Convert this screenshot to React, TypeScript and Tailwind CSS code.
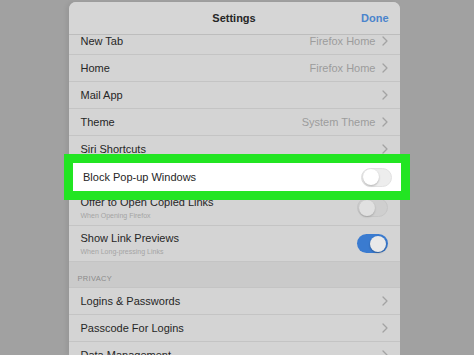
import React from "react";

const Chevron = () => (
  <svg width="6" height="10" viewBox="0 0 6 10" className="ml-[6px]">
    <path d="M1 1l4 4-4 4" fill="none" stroke="#a3a3a3" strokeWidth="1.3" strokeLinecap="round" strokeLinejoin="round" />
  </svg>
);

const Toggle = ({ on }: { on?: boolean }) =>
  on ? (
    <div className="w-[31px] h-[19px] rounded-full bg-[#3a7bd0] flex items-center justify-end pr-[1.5px]">
      <div className="w-[16px] h-[16px] rounded-full bg-[#e9e9e9] shadow-[0_1px_2px_rgba(0,0,0,0.3)]" />
    </div>
  ) : (
    <div className="w-[31px] h-[19px] rounded-full bg-[#cfcfcf] border border-[#c6c6c6] flex items-center pl-[1px]">
      <div className="w-[16px] h-[16px] rounded-full bg-[#e0e0e0] shadow-[0_1px_2px_rgba(0,0,0,0.2)]" />
    </div>
  );

const Row = ({ label, value, chevron = true }: { label: string; value?: string; chevron?: boolean }) => (
  <div className="h-[27px] flex items-center pl-[12px] pr-[12px] border-b border-[#c4c4c4]">
    <span className="text-[11px] text-[#262626] flex-1">{label}</span>
    {value && <span className="text-[11px] text-[#9c9c9c]">{value}</span>}
    {chevron && <Chevron />}
  </div>
);

const ToggleRow = ({ label, sub, on }: { label: string; sub: string; on?: boolean }) => (
  <div className="h-[36px] flex items-center pl-[12px] pr-[12px] border-b border-[#c4c4c4]">
    <div className="flex-1 flex flex-col">
      <span className="text-[11px] leading-[15px] text-[#262626]">{label}</span>
      <span className="text-[7px] leading-[11px] text-[#a4a4a4]">{sub}</span>
    </div>
    <Toggle on={on} />
  </div>
);

export default function App() {
  return (
    <div
      className="relative w-[474px] h-[355px] overflow-hidden bg-[#a1a1a1] flex justify-center"
      style={{ fontFamily: '"Liberation Sans", Arial, sans-serif' }}
    >
      <div className="mt-[2px] w-[331px] h-[353px] rounded-t-[7px] overflow-hidden bg-[#d4d4d4] flex flex-col ml-[-6px] shadow-[-3px_0_4px_rgba(0,0,0,0.06)]">
        <div className="h-[33px] shrink-0 flex items-center justify-center relative bg-[#d6d6d6] border-b border-[#bdbdbd] z-10">
          <span className="text-[11px] font-bold text-[#262626]">Settings</span>
          <span className="absolute right-[11px] text-[11px] font-bold text-[#4a84cc]">Done</span>
        </div>
        <div className="flex-1 overflow-hidden">
          <div className="-mt-[7px] flex flex-col">
            <Row label="New Tab" value="Firefox Home" />
            <Row label="Home" value="Firefox Home" />
            <Row label="Mail App" />
            <Row label="Theme" value="System Theme" />
            <Row label="Siri Shortcuts" />
            <div className="h-[27px] border-b border-[#c4c4c4]" />
            <ToggleRow label="Offer to Open Copied Links" sub="When Opening Firefox" />
            <ToggleRow label="Show Link Previews" sub="When Long-pressing Links" on />
            <div className="h-[26px] bg-[#cacaca] flex items-end pl-[9px] pb-[3px] border-b border-[#c4c4c4]">
              <span className="text-[7.5px] text-[#8a8a8a] tracking-[0.3px]">PRIVACY</span>
            </div>
            <Row label="Logins & Passwords" />
            <Row label="Passcode For Logins" />
            <Row label="Data Management" />
          </div>
        </div>
      </div>
      <div className="absolute left-[64px] top-[154px] w-[346px] h-[46px] border-[9px] border-[#22e522] bg-white flex items-center pl-[10px] pr-[9px]">
        <span className="text-[11px] text-[#262626] flex-1">Block Pop-up Windows</span>
        <div className="w-[31px] h-[19px] rounded-full bg-[#ededed] border border-[#e2e2e2] flex items-center pl-[1px]">
          <div className="w-[16px] h-[16px] rounded-full bg-white shadow-[0_1px_2px_rgba(0,0,0,0.25)]" />
        </div>
      </div>
    </div>
  );
}
